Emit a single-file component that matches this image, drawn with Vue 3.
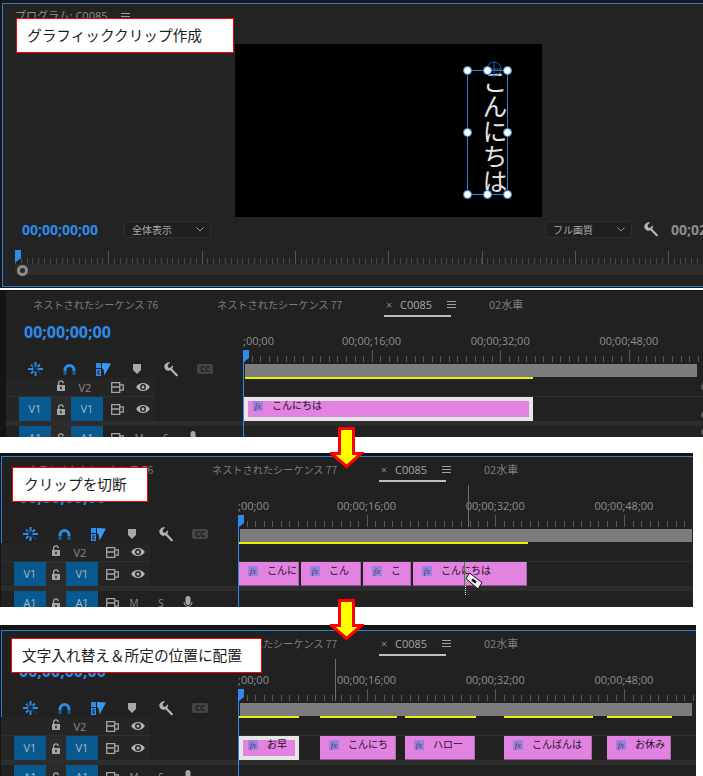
<script setup>
const toolbar = ['snap', 'magnet', 'linked', 'marker', 'wrench', 'cc']

const timelines = [
  {
    id: 'first',
    work: [{ left: 2, width: 288 }],
    clips: [{ left: 1, width: 289, text: 'こんにちは', selected: true }],
    scrub: null,
    razor: false,
  },
  {
    id: 'second',
    work: [{ left: 1, width: 289 }],
    clips: [
      { left: 1, width: 60, text: 'こんに' },
      { left: 63, width: 60, text: 'こん' },
      { left: 125, width: 48, text: 'こ' },
      { left: 175, width: 114, text: 'こんにちは' },
    ],
    scrub: 230,
    razor: true,
  },
  {
    id: 'third',
    work: [
      { left: 1, width: 60 },
      { left: 82, width: 77 },
      { left: 167, width: 71 },
      { left: 266, width: 89 },
      { left: 369, width: 65 },
    ],
    clips: [
      { left: 1, width: 60, text: 'お早', selected: true },
      { left: 82, width: 76, text: 'こんにち' },
      { left: 167, width: 70, text: 'ハロー' },
      { left: 266, width: 88, text: 'こんばんは' },
      { left: 369, width: 64, text: 'お休み' },
    ],
    scrub: 97,
    razor: false,
  },
]

const rulerLabels = [';00;00', '00;00;16;00', '00;00;32;00', '00;00;48;00']

const labels = [
  { id: 'one', text: 'グラフィッククリップ作成' },
  { id: 'two', text: 'クリップを切断' },
  { id: 'three', text: '文字入れ替え＆所定の位置に配置' },
]
</script>

<template>
  <div class="page">
    <svg class="defs" width="0" height="0" aria-hidden="true">
      <symbol id="i-lock" viewBox="0 0 10 11">
        <path d="M2.6 5.5V3.2a2.3 2.3 0 0 1 4.6 0" fill="none" stroke="#a6a6a6" stroke-width="1.3" />
        <path d="M1 5h8v6H1zM4.2 6.8v2.4h1.600V6.800z" fill="#a6a6a6" fill-rule="evenodd" />
      </symbol>
      <symbol id="i-sync" viewBox="0 0 13 11">
        <path d="M.7.7h8v4.300h-8zM.7 5h8v5.300h-8zM8.700 2.800h3.600v5.300H8.700" fill="none" stroke="#a6a6a6" stroke-width="1.300" />
      </symbol>
      <symbol id="i-eye" viewBox="0 0 14 10">
        <path d="M.2 5C3-.2 11-.2 13.800 5 11 10.200 3 10.200.2 5z" fill="#b4b4b4" />
        <circle cx="7" cy="5" r="3" fill="#262626" />
        <circle cx="7" cy="5" r="1.500" fill="#b4b4b4" />
      </symbol>
      <symbol id="i-wrench" viewBox="0 0 16 16">
        <path d="M6.6.6 3.9 3.3l.4 2.500 2.500.4 2.700-2.700c.4 1.500 0 3-.9 3.800l5.900 5.900c.5.5.5 1.200 0 1.700s-1.200.5-1.700 0L6.900 8.900C5.200 9.800 3 9.400 1.600 8 .3 6.700-.1 4.500.8 2.900l2.100-2C4.100.3 5.400.2 6.600.6z" fill="#b4b4b4" />
      </symbol>
    </svg>

    <section class="monitor-wrap">
      <div class="monitor">
        <div class="monitor-title">
          <span>プログラム: C0085</span>
          <span class="menu-lines"><i></i><i></i><i></i></span>
        </div>

        <div class="stage">
          <div class="text-box">
            <span class="vertical-text">こんにちは</span>
            <svg class="anchor" width="16" height="16" viewBox="0 0 16 16">
              <circle cx="8" cy="8" r="7" fill="none" stroke="#1c5ea8" stroke-width="1" />
              <path d="M1 8h14M8 1v14" stroke="#1c5ea8" stroke-width="1" />
            </svg>
            <i class="handle h-tl"></i><i class="handle h-tc"></i><i class="handle h-tr"></i>
            <i class="handle h-ml"></i><i class="handle h-mr"></i>
            <i class="handle h-bl"></i><i class="handle h-bc"></i><i class="handle h-br"></i>
          </div>
        </div>

        <div class="controls">
          <span class="time-small">00;00;00;00</span>
          <div class="select">
            <span>全体表示</span>
            <svg width="8" height="5" viewBox="0 0 8 5"><path d="M.5.5 4 4 7.500.5" fill="none" stroke="#8f8f8f" /></svg>
          </div>
          <div class="select select-right">
            <span>フル画質</span>
            <svg width="8" height="5" viewBox="0 0 8 5"><path d="M.5.5 4 4 7.500.5" fill="none" stroke="#8f8f8f" /></svg>
          </div>
          <svg class="monitor-wrench" width="15" height="15"><use href="#i-wrench" /></svg>
          <span class="time-end">00;02</span>
        </div>

        <div class="monitor-ruler">
          <svg class="head head-monitor" width="6" height="12" viewBox="0 0 6 12"><path d="M0 0h6v8L1 12H0z" fill="#2d8ceb" /></svg>
        </div>
        <div class="monitor-bar">
          <i class="zoom-knob"></i>
        </div>
      </div>
    </section>

    <section v-for="t in timelines" :key="t.id" class="timeline" :class="'tl-' + t.id">
      <div class="tl-inner">
        <div class="tabs">
          <span class="tab tab-76">ネストされたシーケンス 76</span>
          <span class="tab tab-77">ネストされたシーケンス 77</span>
          <span class="tab-active">
            <span class="tab-x">×</span>
            <span class="tab-name">C0085</span>
            <span class="menu-lines"><i></i><i></i><i></i></span>
          </span>
          <span class="tab tab-last">02水車</span>
        </div>

        <div class="tl-grid">
          <div class="heads">
            <div class="time-big">00;00;00;00</div>
            <div class="tools">
              <span v-for="tool in toolbar" :key="tool" class="tool">
                <svg v-if="tool === 'snap'" width="15" height="14" viewBox="0 0 15 14">
                  <path d="M0 7h5.500M9.500 7H15M7.500 0v4.500M7.500 9.500V14M3 2.500 5.500 5M12 2.500 9.500 5M3 11.500 5.500 9" stroke="#2d8ceb" stroke-width="2" fill="none" />
                  <path d="M3.500 1.500 13 12.500" stroke="#13406c" stroke-width="1.300" />
                </svg>
                <svg v-else-if="tool === 'magnet'" width="13" height="11" viewBox="0 0 13 11">
                  <path d="M2 7V6a4.500 4.500 0 0 1 9 0v1" fill="none" stroke="#2d8ceb" stroke-width="3" />
                  <path d="M2 7v4M11 7v4" stroke="#175a9c" stroke-width="3" />
                </svg>
                <svg v-else-if="tool === 'linked'" width="15" height="13" viewBox="0 0 15 13">
                  <path d="M0 0h5v5H0z" fill="#2d8ceb" />
                  <path d="M0 6h5v7H0zM1.500 7.500v4H4v-1H2.500v-2H4v-1z" fill="#2d8ceb" fill-rule="evenodd" />
                  <path d="M6 0l9 .5L8.500 12.500 7.500 6.500 6 5z" fill="#3a97f2" />
                </svg>
                <svg v-else-if="tool === 'marker'" width="8" height="10" viewBox="0 0 8 10">
                  <path d="M0 0h8v6L4 10 0 6z" fill="#a8a8a8" />
                </svg>
                <svg v-else-if="tool === 'wrench'" width="15" height="15"><use href="#i-wrench" /></svg>
                <span v-else class="cc">CC</span>
              </span>
            </div>

            <div class="head-row head-v2">
              <svg class="lock" width="10" height="11"><use href="#i-lock" /></svg>
              <span class="track-name">V2</span>
              <svg class="sync" width="13" height="11"><use href="#i-sync" /></svg>
              <svg class="eye" width="14" height="10"><use href="#i-eye" /></svg>
            </div>
            <div class="head-row head-v1">
              <span class="track-box">V1</span>
              <span class="lock-cell"><svg width="10" height="11"><use href="#i-lock" /></svg></span>
              <span class="track-box">V1</span>
              <svg class="sync" width="13" height="11"><use href="#i-sync" /></svg>
              <svg class="eye" width="14" height="10"><use href="#i-eye" /></svg>
            </div>
            <div class="head-sep"></div>
            <div class="head-row head-a1">
              <span class="track-box">A1</span>
              <span class="lock-cell"><svg width="10" height="11"><use href="#i-lock" /></svg></span>
              <span class="track-box">A1</span>
              <svg class="sync" width="13" height="11"><use href="#i-sync" /></svg>
              <span class="ms">M</span>
              <span class="ms ms-s">S</span>
              <svg class="mic" width="10" height="14" viewBox="0 0 10 14">
                <rect x="2.500" y="0" width="5" height="9" rx="2.500" fill="#a6a6a6" />
                <path d="M1 6c0 6 8 6 8 0M5 11v3" fill="none" stroke="#a6a6a6" />
              </svg>
            </div>
          </div>

          <div class="lane">
            <div class="ruler-labels">
              <span v-for="label in rulerLabels" :key="label" class="ruler-label">{{ label }}</span>
            </div>
            <div class="lane-ruler"></div>
            <div class="work-bar">
              <i v-for="seg in t.work" :key="seg.left" class="work-seg" :style="{ left: seg.left + 'px', width: seg.width + 'px' }"></i>
            </div>
            <div class="lane-v2"></div>
            <div class="lane-v1">
              <div
                v-for="clip in t.clips"
                :key="clip.left"
                class="clip"
                :class="{ selected: clip.selected }"
                :style="{ left: clip.left + 'px', width: clip.width + 'px' }"
              >
                <span class="fx">fx</span>
                <span class="clip-text">{{ clip.text }}</span>
              </div>
            </div>
            <div class="lane-sep"></div>

            <i class="playline"></i>
            <svg class="head head-lane" width="6" height="12" viewBox="0 0 6 12"><path d="M0 0h6v8L1 12H0z" fill="#2d8ceb" /></svg>
            <i v-if="t.scrub" class="scrub" :style="{ left: t.scrub + 'px' }"></i>
            <template v-if="t.razor">
              <i class="cut-line"></i>
              <i class="cut-dots"></i>
              <svg class="razor" width="18" height="18" viewBox="0 0 18 18">
                <path d="M4.500 1 17 10.500 13 17 1 6.500z" fill="#f2f2f2" stroke="#111" stroke-width="1" />
                <path d="M7 7.500l4 3" stroke="#111" stroke-width="2.500" />
              </svg>
            </template>
            <template v-if="t.id === 'first'">
              <i class="edge-dot dot-1"></i>
              <i class="edge-dot dot-2"></i>
              <i class="edge-dot dot-3"></i>
            </template>
          </div>
        </div>
      </div>
    </section>

    <div v-for="l in labels" :key="l.id" class="step-label" :class="'label-' + l.id">{{ l.text }}</div>

    <svg class="arrow arrow-one" width="34" height="42" viewBox="0 0 34 42">
      <path d="M9.500 1.500h14v25h8L16.500 39.500 1.500 26.500h8z" fill="#ffff00" stroke="#ff0000" stroke-width="3" />
    </svg>
    <svg class="arrow arrow-two" width="34" height="42" viewBox="0 0 34 42">
      <path d="M9.500 1.500h14v25h8L16.500 39.500 1.500 26.500h8z" fill="#ffff00" stroke="#ff0000" stroke-width="3" />
    </svg>
  </div>
</template>

<style scoped>
.page {
  position: relative;
  width: 703px;
  height: 776px;
  overflow: hidden;
  background: #fff;
  font-family: "Open Sans", "Noto Sans CJK JP", sans-serif;
}
.defs { position: absolute; }

.menu-lines { display: inline-flex; flex-direction: column; gap: 2px; width: 9px; }
.menu-lines i { display: block; height: 1px; background: #a0a0a0; }

/* program monitor */
.monitor-wrap {
  height: 288px;
  padding: 3px 0 0 2px;
  box-sizing: border-box;
  background: #171717;
}
.monitor {
  height: 284px;
  box-sizing: border-box;
  background: #232323;
  border: 1px solid #2d7fd2;
  border-right: 0;
  overflow: hidden;
}
.monitor-title {
  height: 40px;
  padding: 5px 0 0 12px;
  box-sizing: border-box;
  display: flex;
  align-items: flex-start;
  gap: 13px;
  font-size: 11px;
  line-height: 14px;
  color: #8e8e8e;
}
.monitor-title .menu-lines { margin-top: 4px; }
.stage {
  position: relative;
  height: 173px;
  width: 307px;
  margin-left: 232px;
  background: #000;
}
.text-box {
  position: absolute;
  left: 232px;
  top: 26px;
  width: 39px;
  height: 123px;
  border: 1px solid #2d7fd2;
}
.vertical-text {
  position: absolute;
  right: 0;
  top: -2px;
  writing-mode: vertical-rl;
  font-family: "Noto Sans CJK JP", sans-serif;
  font-size: 25px;
  line-height: 25px;
  font-weight: 400;
  color: #e4e4e4;
  white-space: nowrap;
}
.anchor { position: absolute; left: 18px; top: -10px; }
.handle {
  position: absolute;
  width: 7px;
  height: 7px;
  border-radius: 50%;
  background: #fff;
  border: 1px solid #2d7fd2;
}
.h-tl, .h-tc, .h-tr { top: -5px; }
.h-ml, .h-mr { top: 57px; }
.h-bl, .h-bc, .h-br { bottom: -5px; }
.h-tl, .h-ml, .h-bl { left: -5px; }
.h-tc, .h-bc { left: 15px; }
.h-tr, .h-mr, .h-br { right: -5px; }

.controls {
  display: flex;
  align-items: center;
  height: 17px;
  margin-top: 4px;
  padding-left: 19px;
  white-space: nowrap;
}
.time-small {
  width: 102px;
  flex: none;
  font-size: 14px;
  font-weight: 700;
  color: #2d8ceb;
}
.select {
  width: 87px;
  height: 17px;
  flex: none;
  box-sizing: border-box;
  display: flex;
  align-items: center;
  justify-content: space-between;
  padding: 0 6px 0 7px;
  background: #1f1f1f;
  border: 1px solid #2e2e2e;
  border-radius: 2px;
  font-family: "Noto Sans CJK JP", sans-serif;
  font-size: 10px;
  color: #a8a8a8;
}
.select-right { margin-left: 334px; }
.monitor-wrench { margin-left: 12px; flex: none; }
.time-end {
  margin-left: 12px;
  font-size: 14px;
  font-weight: 700;
  color: #8c8c8c;
}
.monitor-ruler {
  position: relative;
  height: 14px;
  margin-top: 12px;
  margin-left: 12px;
  background:
    repeating-linear-gradient(90deg, #555 0 1px, transparent 1px 93.3px) 0 1px / 100% 13px no-repeat,
    repeating-linear-gradient(90deg, #484848 0 1px, transparent 1px 5.83px) 0 8px / 100% 6px no-repeat;
}
.head { position: absolute; }
.head-monitor { left: 0; top: 0; }
.monitor-bar {
  position: relative;
  height: 11px;
  margin-left: 12px;
  background: #2e2e2e;
}
.zoom-knob {
  position: absolute;
  left: 2px;
  top: 1px;
  width: 11px;
  height: 11px;
  box-sizing: border-box;
  border: 3px solid #8c8c8c;
  border-radius: 50%;
  background: #2a2a2a;
}

/* timelines */
.timeline {
  box-sizing: border-box;
  background: #141414;
  overflow: hidden;
}
.tl-first { height: 147px; margin-top: 2px; padding: 1px 0 0 6px; }
.tl-second { height: 154px; width: 693px; margin-top: 16px; padding: 3px 0 0 1px; }
.tl-third { height: 151px; width: 696px; margin-top: 18px; padding: 5px 0 0 1px; }
.tl-inner {
  height: 100%;
  background: #212121;
}
.tl-second .tl-inner, .tl-third .tl-inner {
  box-shadow: inset 1px 1px 0 #2d7fd2;
}
.tabs {
  display: flex;
  height: 27px;
  padding-left: 27px;
  font-family: "Noto Sans CJK JP", "Open Sans", sans-serif;
  white-space: nowrap;
}
.tab {
  font-size: 10.2px;
  line-height: 27px;
  color: #7e7e7e;
}
.tab-76 { width: 184px; flex: none; }
.tab-77 { width: 167px; flex: none; }
.tab-last { margin-left: 32px; font-size: 11px; }
.tab-active {
  display: flex;
  align-items: center;
  width: 73px;
  height: 26px;
  background: linear-gradient(#bdbdbd, #bdbdbd) 0 100% / 67px 2px no-repeat;
}
.tab-x { font-family: "Open Sans", sans-serif; width: 16px; font-size: 11px; color: #8a8a8a; padding-left: 2px; box-sizing: border-box; }
.tab-name { width: 47px; font-family: "Open Sans", sans-serif; font-size: 11px; color: #a6a6a6; }

.tl-grid {
  display: grid;
  grid-template-columns: 237px 1fr;
}
.heads { min-width: 0; }
.time-big {
  height: 42px;
  padding: 2px 0 0 18px;
  box-sizing: border-box;
  font-size: 16px;
  line-height: 24px;
  font-weight: 700;
  color: #2d8ceb;
}
.tools {
  display: flex;
  height: 18px;
  padding-left: 12px;
}
.tool {
  width: 34px;
  display: flex;
  align-items: center;
  justify-content: center;
}
.cc {
  width: 16px;
  height: 10px;
  border-radius: 2px;
  background: #454545;
  color: #1f1f1f;
  font-size: 8px;
  line-height: 10px;
  font-weight: 700;
  text-align: center;
}
.head-row {
  position: relative;
  display: flex;
  align-items: center;
  width: 149px;
  padding-left: 13px;
  box-sizing: border-box;
  background: #252525;
}
.head-v2 { height: 18px; border-bottom: 1px solid #303030; box-sizing: content-box; width: 136px; }
.head-v1 { height: 24px; }
.head-a1 { height: 24px; width: 205px; background: #212121; }
.head-sep { height: 5px; background: #2d2d2d; }
.head-v2 .lock { margin-left: 37px; flex: none; margin-bottom: 3px; }
.track-name {
  width: 32px;
  margin-left: 3px;
  margin-right: 2px;
  flex: none;
  text-align: center;
  font-size: 11px;
  color: #8a8a8a;
}
.track-box {
  width: 32px;
  height: 24px;
  flex: none;
  background: #07598f;
  color: #a9b9c6;
  font-size: 11px;
  line-height: 24px;
  text-align: center;
}
.lock-cell {
  width: 20px;
  height: 24px;
  flex: none;
  display: flex;
  align-items: center;
  justify-content: center;
  background: #2b2b2b;
}
.sync { margin-left: 8px; flex: none; width: 13px; }
.eye { margin-left: 12px; flex: none; }
.ms {
  width: 24px;
  margin-left: 3px;
  flex: none;
  text-align: center;
  font-size: 10px;
  color: #8a8a8a;
}
.ms-s { width: 30px; margin-left: 0; }
.mic { margin-left: 7px; flex: none; }

.lane {
  position: relative;
  min-width: 0;
  overflow: hidden;
  height: 160px;
}
.ruler-labels {
  display: flex;
  height: 32px;
  padding-top: 15px;
  box-sizing: border-box;
  white-space: nowrap;
}
.ruler-label {
  width: 128.7px;
  flex: none;
  font-size: 11px;
  line-height: 16px;
  color: #8e8e8e;
}
.ruler-label:first-child { width: 99px; }
.lane-ruler {
  height: 12px;
  background:
    repeating-linear-gradient(90deg, #585858 0 1px, transparent 1px 128.7px) 0 0 / 100% 12px no-repeat,
    repeating-linear-gradient(90deg, #585858 0 1px, transparent 1px 8.58px) 0 6px / 100% 6px no-repeat;
}
.work-bar {
  position: relative;
  height: 13px;
  width: 452px;
  margin-top: 2px;
  margin-bottom: 2px;
  margin-left: 2px;
  background: #7c7c7c;
}
.work-seg {
  position: absolute;
  top: 13px;
  height: 2px;
  margin-left: -2px;
  background: #f2ee00;
}
.lane-v2 { height: 17px; border-bottom: 1px solid #303030; }
.lane-v1 { position: relative; height: 24px; }
.lane-sep { height: 5px; background: #2d2d2d; }
.clip {
  position: absolute;
  top: 0;
  height: 24px;
  box-sizing: border-box;
  display: flex;
  align-items: flex-start;
  gap: 9px;
  padding: 3px 0 0 9px;
  overflow: hidden;
  background: #e283e1;
  box-shadow: inset 0 -1px 0 #8e5a8e, inset -1px 0 0 #a86ea8;
}
.clip.selected {
  box-shadow: inset 0 0 0 4px #e6e6e6;
}
.fx {
  width: 10px;
  height: 10px;
  margin-top: 1px;
  flex: none;
  background: #9d82d6;
  color: #4d2f8c;
  font-family: "Liberation Serif", serif;
  font-style: italic;
  font-size: 9px;
  line-height: 10px;
  text-align: center;
}
.clip-text {
  font-family: "Noto Sans CJK JP", sans-serif;
  font-size: 10px;
  line-height: 10px;
  color: #26122a;
  white-space: nowrap;
}
.playline {
  position: absolute;
  left: 0;
  top: 32px;
  bottom: 0;
  width: 1px;
  background: #2d8ceb;
}
.head-lane { left: 0; top: 32px; }
.scrub {
  position: absolute;
  top: 2px;
  width: 1px;
  height: 42px;
  background: #6e6e6e;
}
.cut-line {
  position: absolute;
  left: 226px;
  top: 79px;
  width: 1px;
  height: 24px;
  background: #2e8a2e;
}
.cut-dots {
  position: absolute;
  left: 227px;
  top: 103px;
  height: 9px;
  border-left: 1px dotted #fff;
}
.razor { position: absolute; left: 227px; top: 89px; }
.edge-dot {
  position: absolute;
  left: 458px;
  width: 6px;
  height: 6px;
  border-radius: 50%;
  background: #5c5c5c;
}
.dot-1 { top: 66px; }
.dot-2 { top: 94px; }
.dot-3 { top: 111px; }

/* overlays */
.step-label {
  position: absolute;
  box-sizing: border-box;
  background: #fff;
  border: 1px solid #ff0000;
  font-family: "Noto Sans CJK JP", sans-serif;
  font-size: 14.67px;
  line-height: 32px;
  color: #1c1c1c;
  white-space: nowrap;
}
.label-one { left: 16px; top: 18px; width: 218px; height: 35px; padding-left: 10px; }
.label-two { left: 12px; top: 467px; width: 136px; height: 35px; padding-left: 11px; }
.label-three { left: 11px; top: 638px; width: 251px; height: 35px; padding-left: 10px; }
.arrow { position: absolute; left: 330px; }
.arrow-one { top: 427px; }
.arrow-two { top: 599px; }
</style>
